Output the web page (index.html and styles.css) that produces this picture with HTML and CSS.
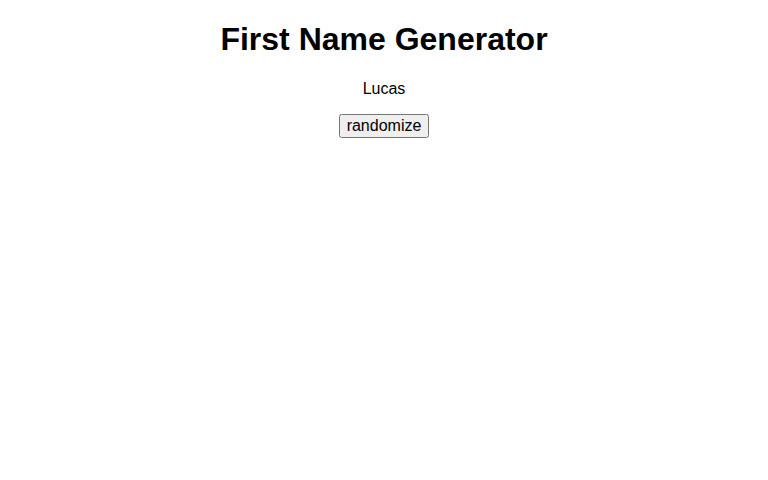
FILE: index.html
```html
<!DOCTYPE html>
<html lang="en">

<head>
    <meta charset="UTF-8">
    <title>First Name Generator</title>
    <link rel="stylesheet" href="styles.css">
</head>

<body>
    <h1>First Name Generator</h1>

    <p id="name">Lucas</p>

    <p>
        <button id="randomize">randomize</button>
    </p>

    <script>
        var names = ['Lucas', 'Emma', 'Noah', 'Olivia', 'Liam', 'Ava', 'Mia', 'Leo'];

        document.getElementById('randomize').addEventListener('click', function() {
            var i = Math.floor(Math.random() * names.length);
            document.getElementById('name').innerText = names[i];
        });
    </script>
</body>

</html>
```

FILE: styles.css
```css
body {
    font-family: "Liberation Sans", Arial, sans-serif;
    margin: 0 8px;
    text-align: center;
}

button {
    font-family: "Liberation Sans", Arial, sans-serif;
    font-size: 16px;
}
```
